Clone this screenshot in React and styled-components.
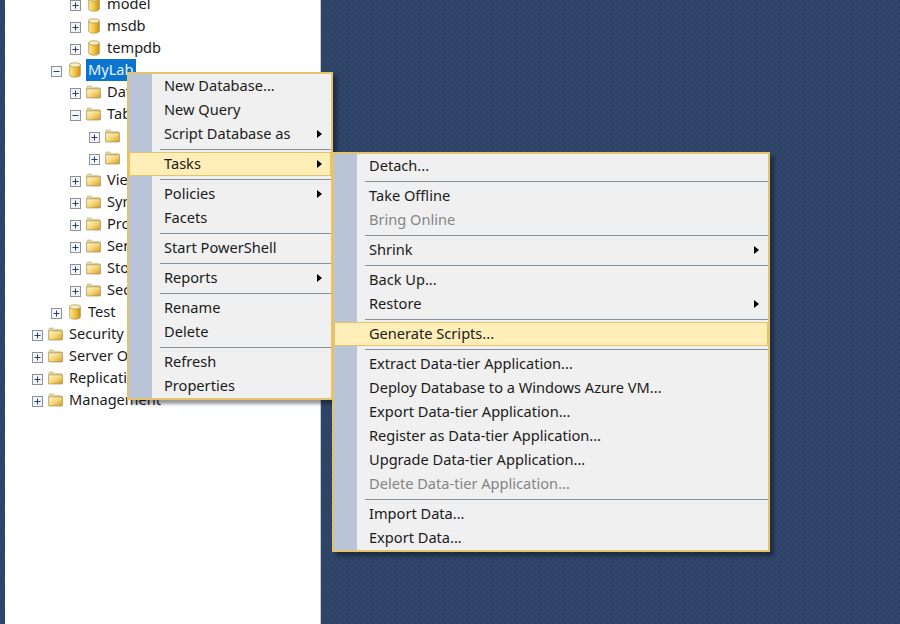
import React from 'react'
import styled, { createGlobalStyle } from 'styled-components'

const GlobalStyle = createGlobalStyle`
  html, body {
    margin: 0;
    height: 624px;
    overflow: hidden;
    background: #2f4468;
  }
`

const navy = `
  background-color: #30466a;
  background-image:
    radial-gradient(circle at 1.5px 1.5px, #2b3f61 1px, transparent 1.4px),
    radial-gradient(circle at 4.5px 4.5px, #2b3f61 1px, transparent 1.4px);
  background-size: 6px 6px;
`

const Page = styled.div`
  position: relative;
  display: flex;
  width: 900px;
  height: 624px;
  overflow: hidden;
  font-family: "Noto Sans", "Open Sans", sans-serif;
  font-size: 14.6px;
  color: #1b1b1b;
`

const Edge = styled.div`
  width: 5px;
  ${navy}
`

const TreePanel = styled.div`
  width: 315px;
  background: #fff;
  border-right: 1px solid #c8ccd2;
  overflow: hidden;
`

const TreeList = styled.div`
  margin-top: -7px;
`

const Workspace = styled.div`
  flex: 1;
  ${navy}
`

const Row = styled.div`
  display: flex;
  align-items: center;
  height: 22px;
  padding-left: ${p => 27 + (p.$level - 1) * 19}px;
  white-space: nowrap;
`

const Expander = styled.svg`
  width: 11px;
  height: 11px;
  flex: none;
  margin-top: 2px;
`

const FolderIcon = styled.svg`
  width: 15px;
  height: 14px;
  flex: none;
  margin-left: 5px;
  margin-right: 4px;
`

const DbIcon = styled.svg`
  width: 12px;
  height: 16px;
  flex: none;
  margin-left: 7px;
  margin-right: 5px;
`

const Label = styled.span`
  display: inline-block;
  height: 22px;
  padding: 0 2px 0 ${p => (p.$level === 4 ? 4 : 2)}px;
  line-height: 20px;
  ${p => p.$selected && 'background: #0a74cf; color: #e8f2fb;'}
`

const Menu = styled.div`
  position: absolute;
  left: ${p => p.$left}px;
  top: ${p => p.$top}px;
  width: ${p => p.$width}px;
  box-sizing: border-box;
  border: 2px solid #e6c36a;
  background: linear-gradient(to right, #b9c5d7 23px, #f0f0f0 23px);
  box-shadow: 4px 4px 3px rgba(10, 15, 25, 0.42);
`

const Item = styled.div`
  display: flex;
  align-items: center;
  justify-content: space-between;
  box-sizing: border-box;
  height: 24px;
  padding: 0 9px 0 ${p => (p.$active ? 34 : 35)}px;
  color: ${p => (p.$disabled ? '#858585' : 'inherit')};
  ${p => p.$active && `
    background: #ffeeb8;
    border: 1px solid #e6c36a;
    padding-right: 8px;
  `}
`

const ItemText = styled.span`
  padding-bottom: 2px;
`

const Arrow = styled.span`
  width: 0;
  height: 0;
  border-left: 5px solid #000;
  border-top: 4px solid transparent;
  border-bottom: 4px solid transparent;
`

const Separator = styled.div`
  height: 6px;
  margin-left: 31px;
  display: flex;
  align-items: center;

  &::after {
    content: "";
    flex: 1;
    height: 1px;
    background: #87929f;
  }
`

const Folder = () => (
  <FolderIcon viewBox="0 0 16 14">
    <path d="M1 3V1.6C1 1 1.4 .6 2 .6h3.4L6.8 2.4H14c.6 0 1 .4 1 1V4H1z" fill="#e8d9a0" stroke="#b8a56a" strokeWidth=".6" />
    <path d="M.6 3.6h14.8v9.2c0 .4-.3.6-.6.6H1.2c-.4 0-.6-.2-.6-.6z" fill="url(#folderFill)" stroke="#9c8a55" strokeWidth=".7" />
  </FolderIcon>
)

const Database = () => (
  <DbIcon viewBox="0 0 13 17">
    <path d="M.7 3v11c0 1.3 2.6 2.3 5.8 2.3s5.8-1 5.8-2.3V3z" fill="url(#dbFill)" stroke="#a98a35" strokeWidth=".7" />
    <ellipse cx="6.5" cy="3" rx="5.8" ry="2.3" fill="#f7edc4" stroke="#a98a35" strokeWidth=".7" />
  </DbIcon>
)

const Toggle = ({ open }) => (
  <Expander viewBox="0 0 11 11">
    <rect x=".5" y=".5" width="10" height="10" fill="#f4f5f7" stroke="#8e9297" />
    <path d="M2.5 5.5h6" stroke="#27406f" />
    {!open && <path d="M5.5 2.5v6" stroke="#27406f" />}
  </Expander>
)

const treeRows = [
  { level: 3, type: 'db', text: 'model' },
  { level: 3, type: 'db', text: 'msdb' },
  { level: 3, type: 'db', text: 'tempdb' },
  { level: 2, type: 'db', text: 'MyLab', open: true, selected: true },
  { level: 3, type: 'folder', text: 'Database Diagrams' },
  { level: 3, type: 'folder', text: 'Tables', open: true },
  { level: 4, type: 'folder', text: 'System Tables' },
  { level: 4, type: 'folder', text: 'FileTables' },
  { level: 3, type: 'folder', text: 'Views' },
  { level: 3, type: 'folder', text: 'Synonyms' },
  { level: 3, type: 'folder', text: 'Programmability' },
  { level: 3, type: 'folder', text: 'Service Broker' },
  { level: 3, type: 'folder', text: 'Storage' },
  { level: 3, type: 'folder', text: 'Security' },
  { level: 2, type: 'db', text: 'Test' },
  { level: 1, type: 'folder', text: 'Security' },
  { level: 1, type: 'folder', text: 'Server Objects' },
  { level: 1, type: 'folder', text: 'Replication' },
  { level: 1, type: 'folder', text: 'Management' },
]

// '-' is a separator line in both menus
const databaseMenu = [
  { text: 'New Database...' },
  { text: 'New Query' },
  { text: 'Script Database as', sub: true },
  '-',
  { text: 'Tasks', sub: true, active: true },
  '-',
  { text: 'Policies', sub: true },
  { text: 'Facets' },
  '-',
  { text: 'Start PowerShell' },
  '-',
  { text: 'Reports', sub: true },
  '-',
  { text: 'Rename' },
  { text: 'Delete' },
  '-',
  { text: 'Refresh' },
  { text: 'Properties' },
]

const tasksMenu = [
  { text: 'Detach...' },
  '-',
  { text: 'Take Offline' },
  { text: 'Bring Online', disabled: true },
  '-',
  { text: 'Shrink', sub: true },
  '-',
  { text: 'Back Up...' },
  { text: 'Restore', sub: true },
  '-',
  { text: 'Generate Scripts...', active: true },
  '-',
  { text: 'Extract Data-tier Application...' },
  { text: 'Deploy Database to a Windows Azure VM...' },
  { text: 'Export Data-tier Application...' },
  { text: 'Register as Data-tier Application...' },
  { text: 'Upgrade Data-tier Application...' },
  { text: 'Delete Data-tier Application...', disabled: true },
  '-',
  { text: 'Import Data...' },
  { text: 'Export Data...' },
]

const MenuList = ({ items, left, top, width }) => (
  <Menu $left={left} $top={top} $width={width}>
    {items.map((item, i) =>
      item === '-' ? (
        <Separator key={i} />
      ) : (
        <Item key={i} $active={item.active} $disabled={item.disabled}>
          <ItemText>{item.text}</ItemText>
          {item.sub && <Arrow />}
        </Item>
      )
    )}
  </Menu>
)

export default function App() {
  return (
    <Page>
      <GlobalStyle />
      <svg width="0" height="0" style={{ position: 'absolute' }}>
        <defs>
          <linearGradient id="folderFill" x1="0" y1="0" x2="1" y2="1">
            <stop offset="0" stopColor="#fff6cf" />
            <stop offset=".5" stopColor="#f6d778" />
            <stop offset="1" stopColor="#d29a28" />
          </linearGradient>
          <linearGradient id="dbFill" x1="0" y1="0" x2="1" y2="0">
            <stop offset="0" stopColor="#fbe9a4" />
            <stop offset=".5" stopColor="#f2c33f" />
            <stop offset="1" stopColor="#c4921e" />
          </linearGradient>
        </defs>
      </svg>
      <Edge />
      <TreePanel>
        <TreeList>
          {treeRows.map((row, i) => (
            <Row key={i} $level={row.level}>
              <Toggle open={row.open} />
              {row.type === 'db' ? <Database /> : <Folder />}
              <Label $selected={row.selected} $level={row.level}>{row.text}</Label>
            </Row>
          ))}
        </TreeList>
      </TreePanel>
      <Workspace />
      <MenuList items={databaseMenu} left={127} top={72} width={206} />
      <MenuList items={tasksMenu} left={332} top={152} width={438} />
    </Page>
  )
}
